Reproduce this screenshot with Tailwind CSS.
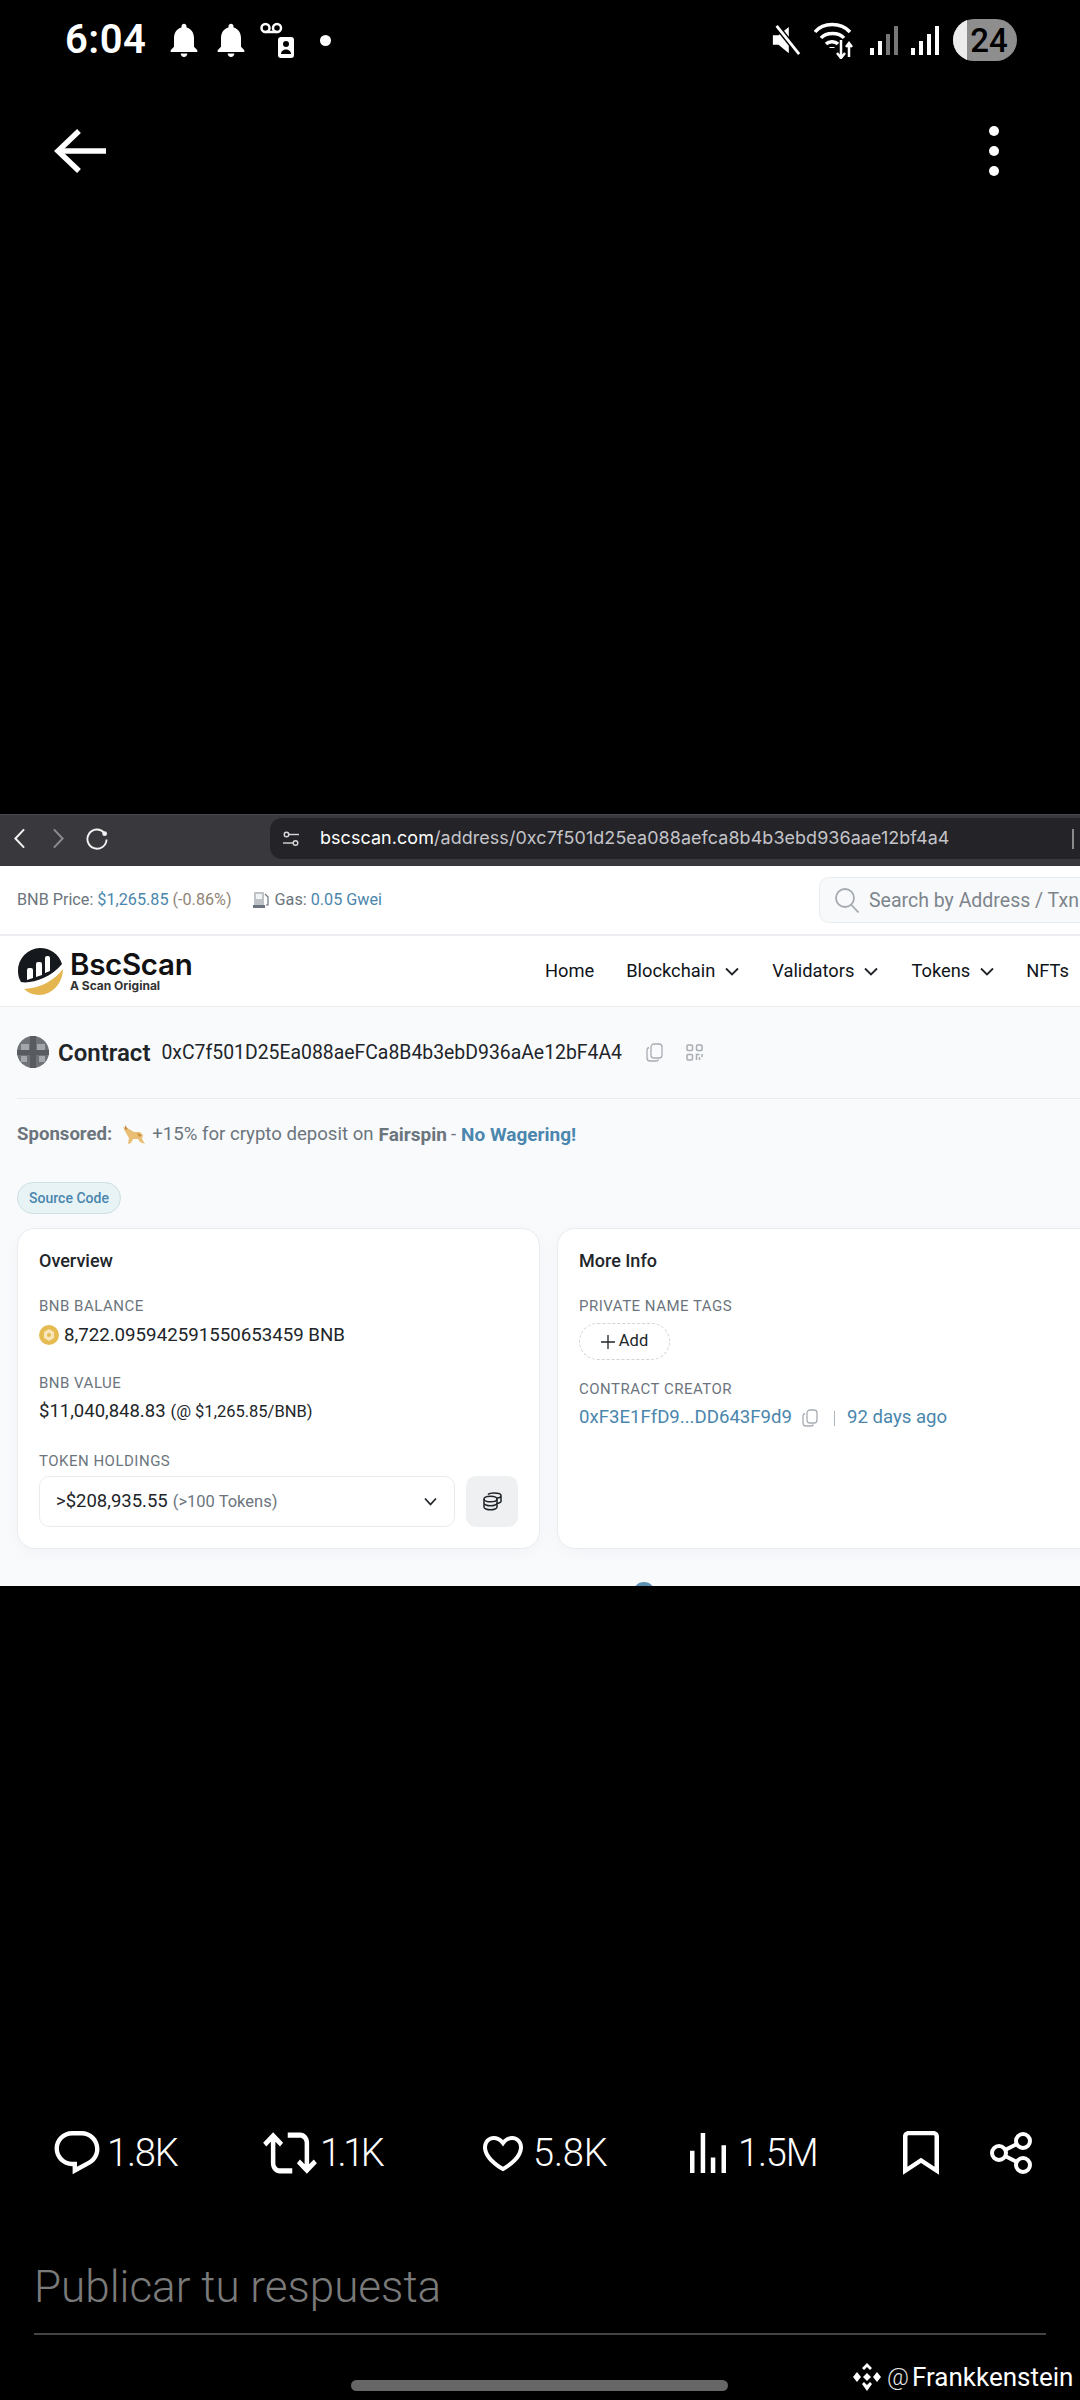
<!DOCTYPE html>
<html lang="es">
<head>
  <meta charset="UTF-8" />
  <title>BscScan</title>
  <script src="https://cdn.jsdelivr.net/npm/@tailwindcss/browser@4"></script>
</head>
<body class="bg-black font-['Roboto',sans-serif]">
  <div class="w-[1080px] h-[2400px] overflow-hidden flex flex-col bg-black">

    <!-- Status bar and app bar -->
    <div class="h-[814px] shrink-0 text-white">
      <div class="h-[80px] flex items-center pl-[65px]">
        <span class="w-[104px] text-[40px] leading-none font-semibold tracking-[0.5px]">6:04</span>
        <svg class="w-[30px] h-[34px]" viewBox="3 2 18 20" preserveAspectRatio="none" fill="#fff"><path d="M12 22c1.100 0 2-.9 2-2h-4c0 1.100.9 2 2 2zm6-6v-5c0-3.070-1.640-5.640-4.500-6.320V4c0-.83-.67-1.500-1.500-1.500s-1.500.67-1.500 1.500v.68C7.630 5.360 6 7.920 6 11v5l-2 2v1h16v-1l-2-2z"/></svg>
        <svg class="w-[30px] h-[34px] ml-[17px]" viewBox="3 2 18 20" preserveAspectRatio="none" fill="#fff"><path d="M12 22c1.100 0 2-.9 2-2h-4c0 1.100.9 2 2 2zm6-6v-5c0-3.070-1.640-5.640-4.500-6.320V4c0-.83-.67-1.500-1.500-1.500s-1.500.67-1.500 1.500v.68C7.630 5.360 6 7.920 6 11v5l-2 2v1h16v-1l-2-2z"/></svg>
        <svg class="w-[36px] h-[36px] ml-[13px]" viewBox="0 0 36 36" fill="none"><circle cx="6.500" cy="6" r="4" stroke="#fff" stroke-width="2.500"/><circle cx="18" cy="6" r="4" stroke="#fff" stroke-width="2.500"/><path d="M6 10h12" stroke="#fff" stroke-width="2.500"/><rect x="19" y="15" width="16" height="21" rx="3" fill="#fff"/><circle cx="27" cy="22" r="3" fill="#000"/><path d="M22 32c0-6 10-6 10 0z" fill="#000"/></svg>
        <span class="w-[11px] h-[11px] rounded-full bg-white ml-[25px]"></span>

        <!-- Right icons -->
        <svg class="w-[30px] h-[30px] ml-[440px]" viewBox="0 0 32 30"><path d="M2 10h6l11-9v28L8 20H2z" fill="#fff"/><path d="M6 0l24 30" stroke="#000" stroke-width="6"/><path d="M6 0l24 30" stroke="#fff" stroke-width="3"/></svg>
        <svg class="w-[40px] h-[38px] ml-[13px]" viewBox="0 0 40 38" fill="none" stroke="#fff" stroke-width="3.500"><path d="M1 11C9 1 27 1 36 11"/><path d="M7 17c5-6 18-6 23 0"/><path d="M12 23c3-3 9-3 12 0"/><path d="M18 26v1" stroke-width="5"/><path d="M27 19v17M23 32l4 5 4-5" stroke-width="2.500"/><path d="M35 36V22M32 26l3-4 3 4" stroke-width="2.500"/></svg>
        <svg class="w-[28px] h-[29px] ml-[16px]" viewBox="0 0 28 29"><rect x="0" y="22" width="4" height="7" fill="#fff"/><rect x="8" y="15" width="4" height="14" fill="#fff"/><rect x="16" y="8" width="4" height="21" fill="#777"/><rect x="24" y="0" width="4" height="29" fill="#777"/></svg>
        <svg class="w-[28px] h-[29px] ml-[13px]" viewBox="0 0 28 29" fill="#fff"><rect x="0" y="22" width="4" height="7"/><rect x="8" y="15" width="4" height="14"/><rect x="16" y="8" width="4" height="21"/><rect x="24" y="0" width="4" height="29"/></svg>
        <div class="ml-[14px] w-[64px] h-[42px] rounded-full overflow-hidden flex bg-[#8e8e8e] text-black items-center">
          <span class="w-[14px] h-full bg-[#ececec]"></span>
          <span class="w-[50px] text-center text-[33px] leading-none font-medium pr-[6px]">24</span>
        </div>
      </div>

      <div class="h-[70px] mt-[36px] flex items-center justify-between pl-[54px] pr-[81px]">
        <svg class="w-[52px] h-[44px]" viewBox="0 0 52 44" fill="none" stroke="#fff" stroke-width="5.500"><path d="M25 2L4 22l21 20"/><path d="M5 22h47"/></svg>
        <div class="flex flex-col gap-[10px]">
          <span class="w-[10px] h-[10px] rounded-full bg-white"></span>
          <span class="w-[10px] h-[10px] rounded-full bg-white"></span>
          <span class="w-[10px] h-[10px] rounded-full bg-white"></span>
        </div>
      </div>
    </div>

    <!-- Browser toolbar -->
    <div class="h-[52px] shrink-0 bg-[#38383d] flex items-start pt-[3px] pl-[14px] border-t border-[#4a4a4e]">
      <div class="h-[41px] flex items-center w-[256px]">
        <svg class="w-[11px] h-[21px]" viewBox="0 0 12 22" fill="none" stroke="#f2f2f2" stroke-width="2.200"><path d="M11 1L1.500 11 11 21"/></svg>
        <svg class="w-[11px] h-[21px] ml-[28px]" viewBox="0 0 12 22" fill="none" stroke="#8c8c90" stroke-width="2.200"><path d="M1 1l9.500 10L1 21"/></svg>
        <svg class="w-[22px] h-[23px] ml-[22px]" viewBox="0 0 23 24" fill="none" stroke="#f2f2f2" stroke-width="2"><path d="M19 6A10 10 0 1 0 21.500 13"/><circle cx="19.500" cy="7" r="2.500" fill="#f2f2f2" stroke="none"/></svg>
      </div>
      <div class="flex-1 h-[41px] bg-[#232328] rounded-l-[12px] flex items-center pl-[13px]">
        <svg class="w-[16px] h-[16px]" viewBox="0 0 16 16" fill="none" stroke="#d8d8d8" stroke-width="1.400"><circle cx="3.500" cy="3.500" r="2.300"/><path d="M6 3.500h10"/><circle cx="12.500" cy="12" r="2.300"/><path d="M0 12h10"/></svg>
        <span class="ml-[21px] font-['Inter',sans-serif] text-[17.900px] tracking-[0.1px] leading-none whitespace-nowrap w-[628px] pb-[2px]"><span class="text-white">bscscan.com</span><span class="text-[#c4c4c8]">/address/0xc7f501d25ea088aefca8b4b3ebd936aae12bf4a4</span></span>
        <span class="ml-[124px] w-[2px] h-[20px] bg-[#8a8a8a]"></span>
      </div>
    </div>

    <!-- Web page -->
    <div class="h-[720px] shrink-0 bg-[#f9fafc] overflow-hidden">
      <div class="h-[70px] bg-white border-b-2 border-[#eceef1] flex items-center justify-between pl-[17px] text-[16.200px] text-[#6c757d]">
        <div class="flex items-center">
          <span>BNB Price:</span>
          <span class="ml-[4px] text-[#4a86ad]">$1,265.85</span>
          <span class="ml-[4px] text-[#8f8577]">(-0.86%)</span>
          <svg class="w-[16px] h-[17px] ml-[21px]" viewBox="0 0 16 17"><rect x="1" y="1" width="10" height="14" rx="1" fill="#bfc3c7"/><rect x="3" y="3" width="6" height="5" fill="#f2f3f4"/><rect x="0" y="14" width="12" height="3" fill="#6c757d"/><path d="M12 3l3 3v8h-2" fill="none" stroke="#6c757d" stroke-width="1.200"/></svg>
          <span class="ml-[6px]">Gas:</span>
          <span class="ml-[4px] text-[#4a86ad]">0.05 Gwei</span>
        </div>
        <div class="w-[261px] h-[46px] bg-[#f8f9fa] border border-[#e9ecef] border-r-0 rounded-l-[10px] flex items-center pl-[15px] overflow-hidden">
          <svg class="w-[24px] h-[25px] shrink-0" viewBox="0 0 24 25" fill="none" stroke="#a5abb1" stroke-width="1.800"><circle cx="10" cy="10" r="9"/><path d="M16.500 17l7 7.500"/></svg>
          <span class="ml-[10px] text-[19.500px] text-[#7d858c] whitespace-nowrap pt-[2px]">Search by Address / Txn</span>
        </div>
      </div>

      <div class="h-[71px] bg-white border-b border-[#e9ecef] flex items-center pl-[17px]">
        <svg class="w-[46px] h-[47px]" viewBox="0 0 46 47">
          <path d="M23 0A22.500 22.500 0 0 0 1 23c0 4 1 8 3 11 10 2 30-4 41-18C42 6 33 0 23 0z" fill="#15181c"/>
          <path d="M10 32V22q0-2 2-2h2q2 0 2 2v8zM19 29V16q0-2 2-2h2q2 0 2 2v11zM28 25V10q0-2 2-2h1q2 0 2 2v13z" fill="#fff"/>
          <path d="M46 21c0 14-11 26-24 26-6 0-12-3-15-6 16-1 30-8 39-20z" fill="#e5b64f"/>
        </svg>
        <div class="ml-[7px] flex flex-col w-[123px] mt-[-2px]">
          <span class="font-['Inter',sans-serif] text-[29.500px] leading-[30px] font-semibold tracking-[-0.3px] text-[#111]">BscScan</span>
          <span class="font-['Inter',sans-serif] text-[12px] leading-[13px] font-bold text-[#333]">A Scan Original</span>
        </div>
        <div class="ml-[352px] flex items-center text-[18.300px] text-[#0f1419] whitespace-nowrap">
          <span>Home</span>
          <span class="ml-[32px]">Blockchain</span>
          <svg class="w-[14px] h-[9px] ml-[10px]" viewBox="0 0 14 9" fill="none" stroke="#1f2328" stroke-width="1.800"><path d="M1 1.500l6 6 6-6"/></svg>
          <span class="ml-[33px]">Validators</span>
          <svg class="w-[14px] h-[9px] ml-[10px]" viewBox="0 0 14 9" fill="none" stroke="#1f2328" stroke-width="1.800"><path d="M1 1.500l6 6 6-6"/></svg>
          <span class="ml-[33px]">Tokens</span>
          <svg class="w-[14px] h-[9px] ml-[10px]" viewBox="0 0 14 9" fill="none" stroke="#1f2328" stroke-width="1.800"><path d="M1 1.500l6 6 6-6"/></svg>
          <span class="ml-[32px]">NFTs</span>
        </div>
      </div>

      <!-- Contract heading -->
      <div class="pl-[17px]">
        <div class="h-[92px] flex items-center border-b border-[#e9ecef]">
          <svg class="w-[32px] h-[32px] mt-[-1px]" viewBox="0 0 32 32">
            <circle cx="16" cy="16" r="16" fill="#6f7378"/>
            <path d="M4 8h8v6H4zM20 8h8v6h-8zM4 20h6v6H4zM22 20h6v6h-6z" fill="#a3a6aa"/>
            <path d="M13 0h6v32h-6zM0 14h32v5H0z" fill="#585c60"/>
          </svg>
          <span class="ml-[9px] text-[24px] font-semibold text-[#212529]">Contract</span>
          <span class="ml-[11px] text-[19.400px] text-[#212529] whitespace-nowrap">0xC7f501D25Ea088aeFCa8B4b3ebD936aAe12bF4A4</span>
          <svg class="w-[17px] h-[19px] ml-[24px]" viewBox="0 0 17 19" fill="none" stroke="#a8adb2" stroke-width="1.300"><rect x="5" y="1" width="11" height="14" rx="3"/><path d="M3 4.500Q1 5 1 7v8q0 3 3 3h6q2 0 2.500-1.500"/></svg>
          <svg class="w-[17px] h-[17px] ml-[23px]" viewBox="0 0 17 17" fill="none" stroke="#a8adb2" stroke-width="1.500"><rect x="1" y="1" width="5.500" height="5.500" rx="1"/><rect x="10.500" y="1" width="5.500" height="5.500" rx="1"/><rect x="1" y="10.500" width="5.500" height="5.500" rx="1"/><path d="M10.500 16v-5.500h3M16 10v3M13.500 13v3"/></svg>
        </div>

        <div class="h-[70px] pt-[2px] flex items-center text-[18.600px] text-[#6c757d] whitespace-nowrap">
          <span class="font-bold">Sponsored:</span>
          <svg class="w-[24px] h-[22px] ml-[10px]" viewBox="0 0 24 22"><path d="M1 3l6 2 5 3 6 0 3 3-1 4 3 5-5-2-2-3-5 0-2 4-3 1 1-6-3-5z" fill="#e9bd74"/><path d="M3 1l3 4-3 1zM15 9l5 2-3 2z" fill="#c98f3f"/></svg>
          <span class="ml-[6px]">+15% for crypto deposit on</span>
          <span class="ml-[5px] font-bold text-[19px]">Fairspin</span>
          <span class="ml-[4px]">-</span>
          <span class="ml-[5px] font-bold text-[19px] text-[#4a86ad]">No Wagering!</span>
        </div>

        <div class="mt-[13px] w-[104px] h-[32px] rounded-full bg-[#e8f3f5] border border-[#cfdfe3] flex items-center justify-center text-[14px] font-medium text-[#4a86ad]">Source Code</div>

        <!-- Cards -->
        <div class="mt-[14px] flex gap-[17px]">
          <div class="w-[523px] h-[321px] shrink-0 bg-white border border-[#e9ecef] rounded-[18px] px-[21px] pt-[21px] shadow-[0_4px_16px_rgba(189,197,209,0.12)]">
            <div class="text-[18px] leading-[21px] font-medium text-[#212529]">Overview</div>
            <div class="mt-[26px] text-[15px] leading-[18px] tracking-[0.5px] text-[#6c757d]">BNB BALANCE</div>
            <div class="mt-[8px] h-[24px] flex items-center text-[18.700px] text-[#212529] whitespace-nowrap">
              <svg class="w-[20px] h-[20px] mr-[5px]" viewBox="0 0 20 20"><circle cx="10" cy="10" r="10" fill="#e6bb52"/><path d="M10 4l5 3v6l-5 3-5-3V7z" fill="#f7e6bb"/><circle cx="10" cy="10" r="2" fill="#e6bb52"/></svg>
              <span>8,722.095942591550653459 BNB</span>
            </div>
            <div class="mt-[27px] text-[15px] leading-[18px] tracking-[0.5px] text-[#6c757d]">BNB VALUE</div>
            <div class="mt-[8px] h-[24px] flex items-center text-[18.500px] text-[#212529] whitespace-nowrap">$11,040,848.83<span class="ml-[5px] text-[16.500px]">(@ $1,265.85/BNB)</span></div>
            <div class="mt-[28px] text-[15px] leading-[18px] tracking-[0.5px] text-[#6c757d]">TOKEN HOLDINGS</div>
            <div class="mt-[6px] flex gap-[11px]">
              <div class="w-[418px] h-[51px] border border-[#e9ecef] rounded-[10px] flex items-center justify-between pl-[16px] pr-[17px]">
                <span class="text-[18.500px] text-[#212529] whitespace-nowrap">&gt;$208,935.55<span class="ml-[5px] text-[16.500px] text-[#6c757d]">(&gt;100 Tokens)</span></span>
                <svg class="w-[13px] h-[9px]" viewBox="0 0 13 9" fill="none" stroke="#212529" stroke-width="1.800"><path d="M1 1.500l5.500 6 5.500-6"/></svg>
              </div>
              <div class="w-[52px] h-[51px] bg-[#eef0f2] rounded-[10px] flex items-center justify-center">
                <svg class="w-[19px] h-[19px]" viewBox="0 0 19 19" fill="none" stroke="#212529" stroke-width="1.500"><ellipse cx="7.500" cy="7" rx="6.500" ry="2.800"/><path d="M1 7v8c0 1.500 3 2.800 6.500 2.800S14 16.500 14 15V7M1 11c0 1.500 3 2.800 6.500 2.800S14 12.500 14 11"/><path d="M5 2.500C6 1.500 9 1 11 1c4 0 7 1 7 2.500v6c0 .8-1.500 1.500-4 2M14 6c2.500-.2 4-1 4-2.500"/></svg>
              </div>
            </div>
          </div>

          <div class="w-[600px] h-[321px] shrink-0 bg-white border border-[#e9ecef] rounded-[18px] px-[21px] pt-[21px] shadow-[0_4px_16px_rgba(189,197,209,0.12)]">
            <div class="text-[18px] leading-[21px] font-medium text-[#212529]">More Info</div>
            <div class="mt-[26px] text-[15px] leading-[18px] tracking-[0.5px] text-[#6c757d]">PRIVATE NAME TAGS</div>
            <div class="mt-[8px] w-[91px] h-[37px] rounded-full border border-dashed border-[#ced4da] flex items-center justify-center text-[16.500px] text-[#212529]">
              <svg class="w-[14px] h-[14px] mr-[4px]" viewBox="0 0 14 14" stroke="#212529" stroke-width="1.300"><path d="M7 0v14M0 7h14"/></svg>
              Add
            </div>
            <div class="mt-[20px] text-[15px] leading-[18px] tracking-[0.5px] text-[#6c757d]">CONTRACT CREATOR</div>
            <div class="mt-[8px] h-[24px] flex items-center text-[18.600px] text-[#4a86ad] whitespace-nowrap">
              <span>0xF3E1FfD9...DD643F9d9</span>
              <svg class="w-[16px] h-[18px] ml-[10px]" viewBox="0 0 16 18" fill="none" stroke="#a8adb2" stroke-width="1.300"><rect x="5" y="1" width="10" height="13" rx="3"/><path d="M3 4.500Q1 5 1 7v7q0 3 3 3h5q2 0 2.500-1.500"/></svg>
              <span class="ml-[16px] w-px h-[15px] bg-[#adb5bd]"></span>
              <span class="ml-[12px]">92 days ago</span>
            </div>
          </div>
        </div>

        <div class="mt-[33px] ml-[616px] w-[22px] h-[22px] rounded-full bg-[#5d8fb0]"></div>
      </div>
    </div>

    <!-- Post actions -->
    <div class="flex-1 text-white">
      <div class="mt-[543px] h-[48px] flex items-center pl-[54px] text-[38px] font-light tracking-[-1.200px] leading-none">
        <div class="w-[209px] flex items-center">
          <svg class="w-[46px] h-[46px] mr-[7px]" viewBox="1.500 1.500 21 21" fill="#fff"><path d="M1.751 10c0-4.420 3.584-8 8.005-8h4.366c4.490 0 8.129 3.640 8.129 8.130 0 2.960-1.607 5.680-4.196 7.110l-8.054 4.460v-3.690h-.067c-4.490.1-8.183-3.510-8.183-8.010zm8.005-6c-3.317 0-6.005 2.690-6.005 6 0 3.370 2.770 6.080 6.138 6.010l.351-.01h1.761v2.300l5.087-2.810c1.951-1.080 3.163-3.130 3.163-5.360 0-3.390-2.744-6.130-6.129-6.130H9.756z"/></svg>
          <span>1.8K</span>
        </div>
        <div class="w-[218px] flex items-center">
          <svg class="w-[54px] h-[46px] mr-[3px]" viewBox="0 3 24 18" preserveAspectRatio="none" fill="#fff"><path d="M4.500 3.880l4.432 4.140-1.364 1.460L5.500 7.550V16c0 1.100.896 2 2 2H13v2H7.500c-2.209 0-4-1.790-4-4V7.550L1.432 9.480.068 8.020 4.500 3.880zM16.500 6H11V4h5.500c2.209 0 4 1.790 4 4v8.450l2.068-1.930 1.364 1.460-4.432 4.140-4.432-4.140 1.364-1.460 2.068 1.930V8c0-1.100-.896-2-2-2z"/></svg>
          <span class="tracking-[-3.500px]">1.1K</span>
        </div>
        <div class="w-[209px] flex items-center">
          <svg class="w-[44px] h-[42px] mr-[8px]" viewBox="1 2.500 22 19" fill="#fff"><path d="M16.697 5.500c-1.222-.06-2.679.51-3.890 2.160l-.805 1.090-.806-1.090C9.984 6.010 8.526 5.440 7.304 5.500c-1.243.07-2.349.78-2.910 1.910-.552 1.120-.633 2.780.479 4.820 1.074 1.970 3.257 4.270 7.129 6.610 3.870-2.340 6.052-4.640 7.126-6.610 1.111-2.040 1.030-3.700.477-4.820-.561-1.130-1.666-1.840-2.908-1.910zm4.187 7.690c-1.351 2.480-4.001 5.120-8.379 7.670l-.503.3-.504-.3c-4.379-2.550-7.029-5.190-8.382-7.670-1.360-2.500-1.410-4.860-.514-6.670.887-1.790 2.647-2.910 4.601-3.010 1.651-.09 3.368.56 4.798 2.010 1.429-1.450 3.146-2.100 4.796-2.010 1.954.1 3.714 1.220 4.601 3.010.896 1.810.846 4.170-.514 6.670z"/></svg>
          <span class="tracking-[-0.200px]">5.8K</span>
        </div>
        <div class="w-[213px] flex items-center">
          <svg class="w-[36px] h-[40px] mr-[12px]" viewBox="4 3 16 18" preserveAspectRatio="none" fill="#fff"><path d="M8.750 21V3h2v18h-2zM18 21V8.500h2V21h-2zM4 21l.004-10h2L6 21H4zm9.248 0v-7h2v7h-2z"/></svg>
          <span>1.5M</span>
        </div>
        <div class="w-[87px]">
          <svg class="w-[36px] h-[44px]" viewBox="4 2 16 21" preserveAspectRatio="none" fill="#fff"><path d="M4 4.500C4 3.120 5.119 2 6.500 2h11C18.881 2 20 3.120 20 4.500v18.440l-8-5.710-8 5.710V4.500zM6.500 4c-.276 0-.5.22-.5.500v14.560l6-4.290 6 4.290V4.500c0-.28-.224-.5-.5-.5h-11z"/></svg>
        </div>
        <svg class="w-[42px] h-[42px]" viewBox="0 0 42 42" fill="none" stroke="#fff" stroke-width="4"><circle cx="33" cy="9" r="7"/><circle cx="9" cy="21" r="7"/><circle cx="33" cy="33" r="7"/><path d="M15 18l12-6M15 24l12 6"/></svg>
      </div>

      <div class="mt-[84px] ml-[34px] text-[44px] leading-[52px] font-light text-[#7a7a7a]">Publicar tu respuesta</div>
      <div class="mt-[20px] ml-[34px] w-[1012px] h-[2px] bg-[#444]"></div>

      <div class="mt-[27px] flex items-center pl-[351px]">
        <div class="w-[377px] h-[11px] shrink-0 rounded-full bg-[#666] mt-[18px]"></div>
        <svg class="w-[28px] h-[28px] shrink-0 ml-[125px]" viewBox="0 0 28 28" fill="#fff"><path d="M14 0l5 5-2 2-3-3-3 3-2-2zM4 9l4 5-4 5-4-5zM24 9l4 5-4 5-4-5zM14 10l4 4-4 4-4-4zM9 21l2-2 3 3 3-3 2 2-5 7z"/></svg>
        <span class="ml-[6px] text-[24px] leading-none font-light text-[#e8e8e8]">@</span>
        <span class="ml-[3px] text-[26px] leading-none whitespace-nowrap text-white">Frankkenstein</span>
      </div>
    </div>
  </div>
</body>
</html>
